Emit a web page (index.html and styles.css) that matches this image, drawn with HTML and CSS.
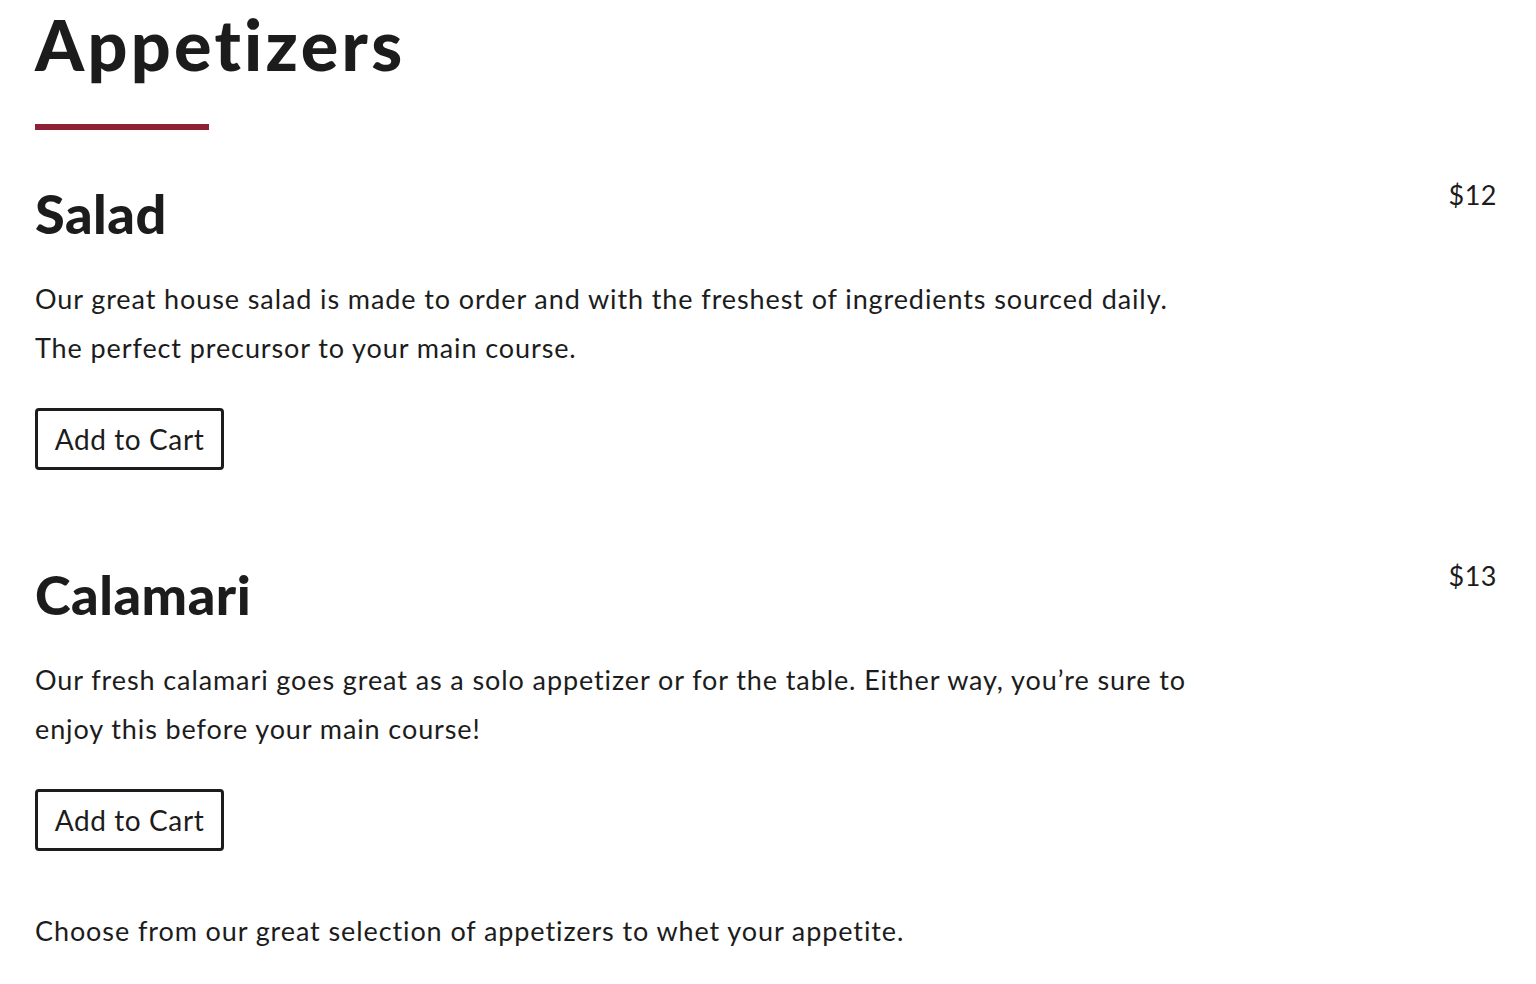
FILE: index.html
```html
<!DOCTYPE html>
<html lang="en">
<head>
<meta charset="utf-8">
<title>Appetizers</title>
<link rel="stylesheet" href="styles.css">
</head>
<body>
<main class="menu">
  <h1 class="menu-title">Appetizers</h1>
  <div class="title-rule"></div>

  <section class="item">
    <div class="item-body">
      <h2 class="item-name">Salad</h2>
      <p class="item-desc">Our great house salad is made to order and with the freshest of ingredients sourced daily.<br>The perfect precursor to your main course.</p>
      <button class="add-btn" type="button">Add to Cart</button>
    </div>
    <div class="item-price">$12</div>
  </section>

  <section class="item">
    <div class="item-body">
      <h2 class="item-name">Calamari</h2>
      <p class="item-desc">Our fresh calamari goes great as a solo appetizer or for the table. Either way, you’re sure to<br>enjoy this before your main course!</p>
      <button class="add-btn" type="button">Add to Cart</button>
    </div>
    <div class="item-price">$13</div>
  </section>

  <p class="menu-note">Choose from our great selection of appetizers to whet your appetite.</p>
</main>
</body>
</html>
```

FILE: styles.css
```css
html, body {
  margin: 0;
  padding: 0;
  background: #ffffff;
}

body {
  font-family: "Lato", "Noto Sans", sans-serif;
  color: #1c1c1c;
  font-variant-ligatures: none;
}

.menu {
  padding: 6px 39px 0 35px;
}

.menu-title {
  margin: 0;
  font-size: 70px;
  line-height: 76px;
  font-weight: 900;
  letter-spacing: 3.3px;
}

.title-rule {
  width: 174px;
  height: 6px;
  background: #8e2133;
  margin-top: 42px;
}

.item {
  display: flex;
  justify-content: space-between;
  align-items: flex-start;
  margin-top: 50px;
}

.item + .item {
  margin-top: 91px;
}

.item-name {
  margin: 4px 0 0 0;
  font-size: 54px;
  line-height: 60px;
  font-weight: 900;
  letter-spacing: 0.5px;
}

.item-desc {
  margin: 30px 0 0 0;
  font-size: 27px;
  line-height: 49px;
  font-weight: 400;
  letter-spacing: 0.9px;
}

.add-btn {
  display: block;
  margin-top: 36px;
  font-family: inherit;
  font-size: 28px;
  letter-spacing: 0.6px;
  color: #1c1c1c;
  background: #fff;
  border: 3px solid #1c1c1c;
  border-radius: 4px;
  width: 189px;
  height: 62px;
  padding: 0;
}

.item-price {
  font-size: 27px;
  line-height: 30px;
  letter-spacing: 0.5px;
}

.menu-note {
  margin: 60px 0 0 0;
  font-size: 27px;
  line-height: 40px;
  letter-spacing: 0.9px;
}
```
